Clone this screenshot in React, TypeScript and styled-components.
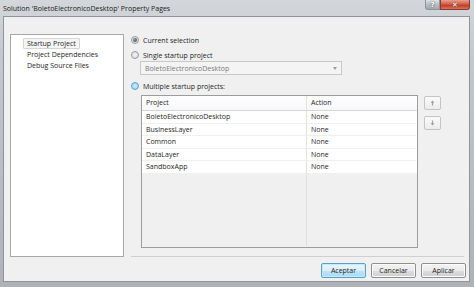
import React from "react";
import styled, { createGlobalStyle } from "styled-components";

const Global = createGlobalStyle`
  html, body { margin: 0; padding: 0; background: #a9adb2; }
  body { font-family: "Open Sans", "Noto Sans", sans-serif; font-size: 7px; color: #1e1e1e; }
  * { box-sizing: border-box; }
`;

const Window = styled.div`
  width: 474px;
  height: 287px;
  display: flex;
  flex-direction: column;
  background: linear-gradient(180deg, #d3d7db 0%, #c4c8cc 20%, #aeb2b6 100%);
  padding: 0 4px 5px 3px;
`;

const TitleBar = styled.div`
  height: 17px;
  display: flex;
  align-items: flex-start;
  justify-content: space-between;
`;

const Title = styled.div`
  padding-top: 4px;
  font-size: 7px;
  color: #1a1a1a;
  white-space: nowrap;
`;

const Caption = styled.div`
  display: flex;
`;

const CapButton = styled.div<{ $close?: boolean }>`
  width: ${(p) => (p.$close ? "30px" : "15px")};
  height: 10px;
  display: flex;
  align-items: center;
  justify-content: center;
  font-family: "DejaVu Sans", sans-serif;
  font-size: 7px;
  font-weight: bold;
  color: #fff;
  border: 1px solid ${(p) => (p.$close ? "#8a3a30" : "#8e9398")};
  border-top: none;
  border-radius: ${(p) => (p.$close ? "0 0 3px 0" : "0 0 0 3px")};
  background: ${(p) =>
    p.$close
      ? "linear-gradient(180deg, #e8a08e 0%, #d0604a 45%, #c23f28 60%, #d8745a 100%)"
      : "linear-gradient(180deg, #dfe3e6 0%, #b9bec3 50%, #a4a9ae 100%)"};
  text-shadow: 0 0 2px #333;
`;

const Client = styled.div`
  flex: 1;
  background: #f0f0f0;
  border: 1px solid #8f949a;
  display: grid;
  grid-template-columns: 114px 1fr;
  grid-template-rows: 1fr auto;
  column-gap: 7px;
  padding: 17px 3px 3px 6px;
`;

const NavList = styled.div`
  background: #fff;
  border: 1px solid #a8a8a8;
  padding: 3px 0 0 12px;
  display: flex;
  flex-direction: column;
  height: 223px;
`;

const NavItem = styled.div<{ $selected?: boolean }>`
  height: 11px;
  line-height: 9px;
  padding: 0 3px;
  align-self: flex-start;
  border: 1px solid ${(p) => (p.$selected ? "#d4d4d4" : "transparent")};
  border-radius: 1px;
  background: ${(p) => (p.$selected ? "#f6f6f6" : "transparent")};
  white-space: nowrap;
`;

const Panel = styled.div`
  display: flex;
  flex-direction: column;
  border-bottom: 1px solid #cfcfcf;
  height: 223px;
  margin-right: 2px;
`;

const RadioRow = styled.div<{ $gap?: number }>`
  display: flex;
  align-items: center;
  gap: 4px;
  height: 12px;
  margin-top: ${(p) => p.$gap ?? 0}px;
  white-space: nowrap;
`;

const Radio = styled.span<{ $checked?: boolean; $hover?: boolean }>`
  width: 8px;
  height: 8px;
  border-radius: 50%;
  flex: none;
  border: 1px solid ${(p) => (p.$hover ? "#4fa3d6" : "#9a9a9a")};
  background: ${(p) =>
    p.$hover
      ? "radial-gradient(circle, #cdeaf8 0%, #9ad1ef 100%)"
      : "radial-gradient(circle, #f4f4f4 0%, #d8d8d8 100%)"};
  display: flex;
  align-items: center;
  justify-content: center;
  &::after {
    content: "";
    display: ${(p) => (p.$checked ? "block" : "none")};
    width: 4px;
    height: 4px;
    border-radius: 50%;
    background: radial-gradient(circle at 35% 35%, #8a9aa8, #2d3f52);
  }
`;

const Combo = styled.div`
  margin: 0 0 0 9px;
  width: 202px;
  height: 14px;
  border: 1px solid #c8c8c8;
  background: #f4f4f4;
  display: flex;
  align-items: center;
  justify-content: space-between;
  padding: 0 4px;
  color: #7a7a7a;
`;

const Arrow = styled.span`
  width: 0;
  height: 0;
  border-left: 2.5px solid transparent;
  border-right: 2.5px solid transparent;
  border-top: 3px solid #9a9a9a;
`;

const GridArea = styled.div`
  display: flex;
  gap: 6px;
  margin: 3px 0 0 10px;
`;

const Table = styled.div`
  width: 277px;
  height: 153px;
  border: 1px solid #9c9c9c;
  background: #f0f0f0;
  display: grid;
  grid-template-columns: 165px 1fr;
  grid-auto-rows: min-content;
`;

const Cell = styled.div<{ $head?: boolean; $last?: boolean }>`
  height: ${(p) => (p.$head ? "15px" : "12.6px")};
  line-height: ${(p) => (p.$head ? "14px" : "12.6px")};
  padding-left: 4px;
  background: ${(p) => (p.$head ? "linear-gradient(180deg, #ffffff, #f7f8fa)" : "#fff")};
  border-bottom: 1px solid ${(p) => (p.$head ? "#d5d5d5" : "#efefef")};
  border-right: 1px solid ${(p) => (p.$last ? "transparent" : "#e2e2e2")};
  color: #1e1e1e;
  white-space: nowrap;
`;

const Filler = styled.div`
  grid-column: 1 / -1;
  height: 72px;
  display: grid;
  grid-template-columns: 165px 1fr;
  & > div:first-child { border-right: 1px solid #e0e0e0; }
`;

const Side = styled.div`
  display: flex;
  flex-direction: column;
  gap: 6px;
  padding-top: 1px;
`;

const MoveButton = styled.div`
  width: 17px;
  height: 14px;
  border: 1px solid #c4c4c4;
  border-radius: 2px;
  background: linear-gradient(180deg, #fafafa, #ececec);
  display: flex;
  align-items: center;
  justify-content: center;
`;

const Buttons = styled.div`
  grid-column: 1 / -1;
  display: flex;
  justify-content: flex-end;
  gap: 5px;
  padding-top: 6px;
`;

const Button = styled.div<{ $default?: boolean }>`
  width: 45px;
  height: 15px;
  border: 1px solid ${(p) => (p.$default ? "#5a9fc8" : "#8e8e8e")};
  border-radius: 2px;
  background: ${(p) =>
    p.$default
      ? "linear-gradient(180deg, #eaf6fd 0%, #d9eef9 50%, #bee4f7 51%, #a9daf3 100%)"
      : "linear-gradient(180deg, #f2f2f2 0%, #ebebeb 50%, #dddddd 51%, #cfcfcf 100%)"};
  box-shadow: inset 0 0 0 1px ${(p) => (p.$default ? "#c8eaf9" : "#fcfcfc")};
  display: flex;
  align-items: center;
  justify-content: center;
  color: #1e1e1e;
`;

const projects = [
  "BoletoElectronicoDesktop",
  "BusinessLayer",
  "Common",
  "DataLayer",
  "SandboxApp",
];

const ArrowIcon = ({ down }: { down?: boolean }) => (
  <svg width="5" height="6" viewBox="0 0 5 6" style={{ transform: down ? "rotate(180deg)" : undefined }}>
    <path d="M2.5 0.5 L4.5 2.7 L3.1 2.7 L3.1 5.5 L1.9 5.5 L1.9 2.7 L0.5 2.7 Z" fill="#9aa0a6" />
  </svg>
);

export default function App() {
  return (
    <>
      <Global />
      <Window>
        <TitleBar>
          <Title>Solution 'BoletoElectronicoDesktop' Property Pages</Title>
          <Caption>
            <CapButton>?</CapButton>
            <CapButton $close>✕</CapButton>
          </Caption>
        </TitleBar>
        <Client>
          <NavList>
            <NavItem $selected>Startup Project</NavItem>
            <NavItem>Project Dependencies</NavItem>
            <NavItem>Debug Source Files</NavItem>
          </NavList>
          <Panel>
            <RadioRow>
              <Radio $checked />
              Current selection
            </RadioRow>
            <RadioRow $gap={3}>
              <Radio />
              Single startup project
            </RadioRow>
            <Combo>
              BoletoElectronicoDesktop
              <Arrow />
            </Combo>
            <RadioRow $gap={5}>
              <Radio $hover />
              Multiple startup projects:
            </RadioRow>
            <GridArea>
              <Table>
                <Cell $head>Project</Cell>
                <Cell $head $last>Action</Cell>
                {projects.map((p) => (
                  <React.Fragment key={p}>
                    <Cell>{p}</Cell>
                    <Cell $last>None</Cell>
                  </React.Fragment>
                ))}
                <Filler>
                  <div />
                  <div />
                </Filler>
              </Table>
              <Side>
                <MoveButton>
                  <ArrowIcon />
                </MoveButton>
                <MoveButton>
                  <ArrowIcon down />
                </MoveButton>
              </Side>
            </GridArea>
          </Panel>
          <Buttons>
            <Button $default>Aceptar</Button>
            <Button>Cancelar</Button>
            <Button>Aplicar</Button>
          </Buttons>
        </Client>
      </Window>
    </>
  );
}
